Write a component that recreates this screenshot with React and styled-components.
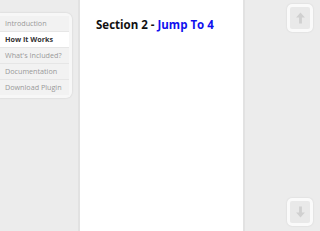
import React from 'react';
import styled, { createGlobalStyle } from 'styled-components';

const Global = createGlobalStyle`
  html, body { margin: 0; padding: 0; background: #ececec; }
  body { font-family: "Open Sans", "DejaVu Sans", sans-serif; }
`;

const Page = styled.div`
  display: grid;
  grid-template-columns: 78px 167px 1fr;
  width: 320px;
  height: 231px;
  overflow: hidden;
  background: #ececec;
`;

const Side = styled.div`
  padding-top: 13px;
`;

const Nav = styled.ul`
  list-style: none;
  margin: 0 0 0 -6px;
  padding: 3px;
  width: 72px;
  background: rgba(255, 255, 255, 0.6);
  border-radius: 6px;
  box-shadow: 0 0 2px rgba(0, 0, 0, 0.15);
`;

const NavItem = styled.li`
  height: 15px;
  line-height: 15px;
  padding-left: 8px;
  font-size: 7.2px;
  color: ${p => (p.active ? '#333' : '#999')};
  font-weight: ${p => (p.active ? 700 : 400)};
  background: ${p => (p.active ? '#fff' : '#f2f2f2')};
  border-bottom: 1px solid #e6e6e6;
  white-space: nowrap;
  &:last-child { border-bottom: none; }
`;

const Content = styled.main`
  background: #fff;
  border-left: 2px solid #e2e2e2;
  border-right: 2px solid #e2e2e2;
  padding: 17px 0 0 16px;
`;

const Title = styled.h2`
  margin: 0;
  font-size: 11.5px;
  font-weight: 700;
  color: #111;
  span { color: #1010ee; }
`;

const Rail = styled.div`
  display: flex;
  flex-direction: column;
  justify-content: space-between;
  align-items: flex-end;
  padding: 4px 7px 5px 0;
`;

const Arrow = styled.div`
  width: 20px;
  height: 22px;
  border: 3px solid #fafafa;
  border-radius: 5px;
  background: #e9e9e9;
  display: flex;
  align-items: center;
  justify-content: center;
  box-shadow: 0 0 2px rgba(0, 0, 0, 0.12);
`;

const ArrowIcon = ({ down }) => (
  <svg width="11" height="14" viewBox="0 0 10 12" style={{ transform: down ? 'rotate(180deg)' : 'none' }}>
    <path d="M5 1 L9 5.5 H6.3 V11 H3.7 V5.5 H1 Z" fill="#d0d0d0" />
  </svg>
);

const items = ['Introduction', 'How It Works', "What's Included?", 'Documentation', 'Download Plugin'];

export default function App() {
  return (
    <>
      <Global />
      <Page>
        <Side>
          <Nav>
            {items.map(i => (
              <NavItem key={i} active={i === 'How It Works'}>{i}</NavItem>
            ))}
          </Nav>
        </Side>
        <Content>
          <Title>Section 2 - <span>Jump To 4</span></Title>
        </Content>
        <Rail>
          <Arrow><ArrowIcon /></Arrow>
          <Arrow><ArrowIcon down /></Arrow>
        </Rail>
      </Page>
    </>
  );
}
